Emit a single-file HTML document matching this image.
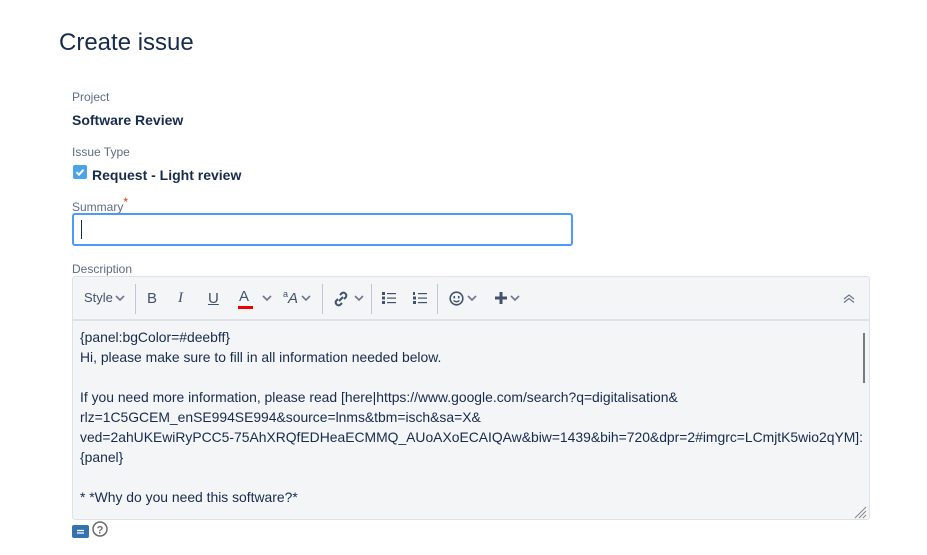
<!DOCTYPE html>
<html><head><meta charset="utf-8"><style>
*{box-sizing:border-box;margin:0;padding:0}
body{width:927px;height:555px;background:#fff;font-family:"Liberation Sans",sans-serif;color:#172b4d;position:relative;overflow:hidden}
.a{position:absolute;white-space:nowrap}
.lbl{font-size:12px;color:#5e6c84}
.b{font-size:14px;font-weight:bold;color:#172b4d}
.tb{color:#42526e;font-size:14px}
.sep{position:absolute;top:7px;width:1px;height:30px;background:#c1c7d0}
.chev{position:absolute;width:10px;height:6px}
</style></head><body>
<div class="a" style="left:59px;top:29px;font-size:24px;color:#172b4d">Create issue</div>
<div class="a lbl" style="left:72px;top:90px">Project</div>
<div class="a b" style="left:72px;top:112px">Software Review</div>
<div class="a lbl" style="left:72px;top:145px">Issue Type</div>
<svg class="a" style="left:73px;top:165px" width="14" height="14"><rect width="14" height="14" rx="2" fill="#4ba3e8"/><path d="M3.5 7.2l2.5 2.5 4.5-5" stroke="#fff" stroke-width="2" fill="none"/></svg>
<div class="a b" style="left:92px;top:167px">Request - Light review</div>
<div class="a lbl" style="left:72px;top:200px">Summary<span style="color:#de350b;position:relative;top:-5px">*</span></div>
<div class="a" style="left:72px;top:213px;width:501px;height:33px;border:2px solid #4c9aff;border-radius:3px;background:#fff"></div>
<div class="a" style="left:81px;top:220px;width:1px;height:19px;background:#172b4d"></div>
<div class="a lbl" style="left:72px;top:262px">Description</div>
<div class="a" style="left:72px;top:276px;width:798px;height:244px;border:1px solid #dfe1e6;border-radius:3px;background:#f4f5f7"></div>
<div class="a" style="left:73px;top:319px;width:796px;height:2px;background:#dfe1e6"></div>
<div class="a" style="left:72px;top:277px;width:798px;height:43px">
 <div class="a tb" style="left:12px;top:13px;font-size:13px">Style</div>
 <svg class="chev" style="left:43px;top:18px"><path d="M1 1l4 4 4-4" stroke="#6b778c" stroke-width="1.6" fill="none"/></svg>
 <div class="sep" style="left:63px"></div>
 <div class="a tb" style="left:75px;top:13px;font-size:15px">B</div>
 <div class="a tb" style="left:106px;top:13px;font-size:15px;font-style:italic;font-family:'Liberation Serif',serif">I</div>
 <div class="a tb" style="left:136px;top:13px;font-size:15px;text-decoration:underline">U</div>
 <div class="a tb" style="left:167px;top:11px;font-size:15px">A</div>
 <div class="a" style="left:166px;top:29px;width:15px;height:3px;background:#e00"></div>
 <svg class="chev" style="left:190px;top:18px"><path d="M1 1l4 4 4-4" stroke="#6b778c" stroke-width="1.6" fill="none"/></svg>
 <div class="a tb" style="left:211px;top:12px;font-size:9px">a</div>
 <div class="a tb" style="left:216px;top:13px;font-size:15px;font-style:italic">A</div>
 <svg class="chev" style="left:229px;top:18px"><path d="M1 1l4 4 4-4" stroke="#6b778c" stroke-width="1.6" fill="none"/></svg>
 <div class="sep" style="left:250px"></div>
 <svg class="a" style="left:260px;top:13px" width="18" height="18"><g fill="none" stroke="#42526e" stroke-width="2"><path d="M7 11l4-4"/><path d="M8 5l2-2a3 3 0 014 4l-2 2"/><path d="M10 13l-2 2a3 3 0 01-4-4l2-2"/></g></svg>
 <svg class="chev" style="left:282px;top:18px"><path d="M1 1l4 4 4-4" stroke="#6b778c" stroke-width="1.6" fill="none"/></svg>
 <div class="sep" style="left:299px"></div>
 <svg class="a" style="left:310px;top:15px" width="14" height="12"><g fill="#42526e"><rect x="0" y="0" width="3" height="3"/><rect x="0" y="4.5" width="3" height="3"/><rect x="0" y="9" width="3" height="3"/><rect x="5" y="1" width="9" height="1.2"/><rect x="5" y="5.5" width="9" height="1.2"/><rect x="5" y="10" width="9" height="1.2"/></g></svg>
 <svg class="a" style="left:341px;top:15px" width="14" height="12"><g fill="#42526e"><rect x="0" y="0" width="2" height="3"/><rect x="0" y="4.5" width="3" height="3"/><rect x="0" y="9" width="3" height="3"/><rect x="5" y="1" width="9" height="1.2"/><rect x="5" y="5.5" width="9" height="1.2"/><rect x="5" y="10" width="9" height="1.2"/></g></svg>
 <div class="sep" style="left:365px"></div>
 <svg class="a" style="left:377px;top:14px" width="15" height="15"><circle cx="7.5" cy="7.5" r="6.3" fill="none" stroke="#42526e" stroke-width="1.6"/><rect x="4.5" y="5" width="1.6" height="2.4" fill="#42526e"/><rect x="8.9" y="5" width="1.6" height="2.4" fill="#42526e"/><path d="M4.5 9.5q3 2.5 6 0" stroke="#42526e" stroke-width="1.4" fill="none"/></svg>
 <svg class="chev" style="left:395px;top:18px"><path d="M1 1l4 4 4-4" stroke="#6b778c" stroke-width="1.6" fill="none"/></svg>
 <svg class="a" style="left:423px;top:15px" width="12" height="12"><path d="M6 0v12M0 6h12" stroke="#42526e" stroke-width="3"/></svg>
 <svg class="chev" style="left:438px;top:18px"><path d="M1 1l4 4 4-4" stroke="#6b778c" stroke-width="1.6" fill="none"/></svg>
 <svg class="a" style="left:771px;top:17px" width="12" height="9"><path d="M1 5l5-4 5 4M1 8.5l5-4 5 4" stroke="#6b778c" stroke-width="1.2" fill="none"/></svg>
</div>
<div class="a" style="left:80px;top:327px;font-size:13.9px;line-height:20px;color:#172b4d">{panel:bgColor=#deebff}<br>Hi, please make sure to fill in all information needed below.<br><br>If you need more information, please read [here|https://www.google.com/search?q=digitalisation&amp;<br>rlz=1C5GCEM_enSE994SE994&amp;source=lnms&amp;tbm=isch&amp;sa=X&amp;<br>ved=2ahUKEwiRyPCC5-75AhXRQfEDHeaECMMQ_AUoAXoECAIQAw&amp;biw=1439&amp;bih=720&amp;dpr=2#imgrc=LCmjtK5wio2qYM]:<br>{panel}<br><br>* *Why do you need this software?*</div>
<div class="a" style="left:863px;top:333px;width:2px;height:50px;background:#7a7a7a"></div>
<svg class="a" style="left:853px;top:505px" width="14" height="14"><path d="M13 2L2 13M13 6L6 13M13 10L10 13" stroke="#888" stroke-width="1"/></svg>
<svg class="a" style="left:72px;top:525px" width="17" height="13"><rect width="17" height="13" rx="2" fill="#3572b0"/><path d="M5 5.5h7M5 8h7" stroke="#fff" stroke-width="1.2"/></svg>
<svg class="a" style="left:92px;top:521px" width="16" height="16"><circle cx="8" cy="8" r="7" fill="none" stroke="#6b6b6b" stroke-width="1.5"/><text x="8" y="12.3" font-size="11" font-family="Liberation Sans" text-anchor="middle" fill="#6b6b6b" font-weight="bold">?</text></svg>
</body></html>
